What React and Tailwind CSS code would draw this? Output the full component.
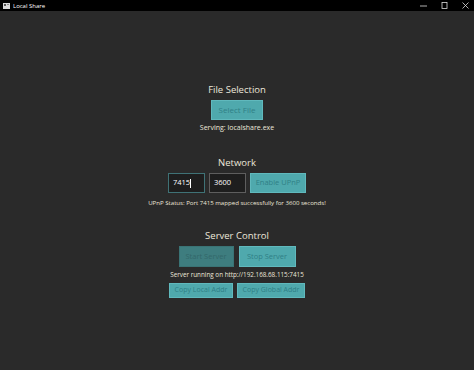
import React from 'react'

const font = { fontFamily: '"Open Sans", "Noto Sans", sans-serif' }

const Btn = ({ children, disabled, className = '' }) => (
    <button
        className={`flex items-center justify-center border whitespace-nowrap ${disabled ? 'bg-[#3e7d7f] border-[#3a7375] text-[#33686a]' : 'bg-[#4fa9ad] border-[#60b9bd] text-[#2f8086]'} ${className}`}
    >
        {children}
    </button>
)

const TitleBar = () => (
    <div className="h-[11px] bg-black flex items-center justify-between pl-[3px] pr-[5px]">
        <div className="flex items-center gap-[3px]">
            <svg width="7" height="6" viewBox="0 0 7 6">
                <rect x="0" y="0" width="7" height="6" fill="#d8d8d8" />
                <rect x="1" y="1" width="2" height="2" fill="#555" />
                <rect x="4" y="1" width="2" height="1" fill="#888" />
            </svg>
            <span className="text-[6px] leading-none text-white">Local Share</span>
        </div>
        <div className="flex items-center gap-[14px] text-[#ddd]">
            <svg width="7" height="7" viewBox="0 0 7 7"><line x1="0" y1="4" x2="7" y2="4" stroke="currentColor" strokeWidth="0.8" /></svg>
            <svg width="7" height="7" viewBox="0 0 7 7"><rect x="1" y="0.5" width="5" height="6" fill="none" stroke="currentColor" strokeWidth="0.8" /></svg>
            <svg width="7" height="7" viewBox="0 0 7 7"><path d="M0.5 0.5 L6.5 6.5 M6.5 0.5 L0.5 6.5" stroke="currentColor" strokeWidth="0.8" /></svg>
        </div>
    </div>
)

export default function App() {
    return (
        <div className="w-[474px] h-[370px] bg-[#2a2a2a] flex flex-col overflow-hidden" style={font}>
            <TitleBar />
            <div className="flex flex-col items-center pt-[73px] text-[#ece7da]">
                {/* file selection */}
                <h2 className="text-[9.5px] leading-[12px]">File Selection</h2>
                <Btn className="mt-[4px] w-[52px] h-[20px] text-[8px]">Select File</Btn>
                <p className="mt-[2px] text-[7px] leading-[12px]">Serving: localshare.exe</p>

                {/* network */}
                <h2 className="mt-[23px] text-[9.5px] leading-[12px]">Network</h2>
                <div className="mt-[4px] flex gap-[4px] h-[20px]">
                    <div className="w-[37px] h-full bg-[#1e1e1e] border border-[#3f7276] flex items-center pl-[4px] text-[7.5px] text-white">
                        7415<span className="w-px h-[9px] bg-white"></span>
                    </div>
                    <div className="w-[37px] h-full bg-[#1e1e1e] border border-[#5e5e5e] flex items-center pl-[4px] text-[7.5px] text-white">
                        3600
                    </div>
                    <Btn className="w-[56px] h-full text-[7.5px]">Enable UPnP</Btn>
                </div>
                <p className="mt-[4px] text-[6.1px] leading-[12px]">UPnP Status: Port 7415 mapped successfully for 3600 seconds!</p>

                {/* server */}
                <h2 className="mt-[21px] text-[9.5px] leading-[12px]">Server Control</h2>
                <div className="mt-[4px] flex gap-[5px]">
                    <Btn disabled className="w-[55px] h-[21px] text-[7.5px]">Start Server</Btn>
                    <Btn className="w-[57px] h-[21px] text-[7.5px]">Stop Server</Btn>
                </div>
                <p className="mt-[2px] text-[6.3px] leading-[12px]">Server running on http://192.168.68.115:7415</p>
                <div className="mt-[2px] flex gap-[4px]">
                    <Btn className="w-[64px] h-[15px] text-[7px]">Copy Local Addr</Btn>
                    <Btn className="w-[68px] h-[15px] text-[7px]">Copy Global Addr</Btn>
                </div>
            </div>
        </div>
    )
}
